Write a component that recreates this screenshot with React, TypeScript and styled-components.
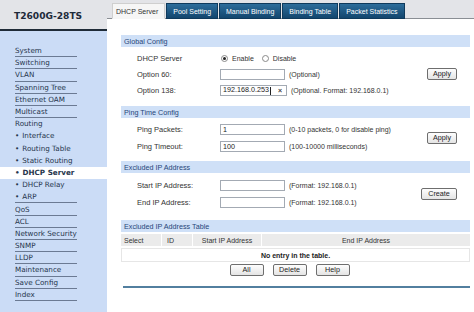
import styled, { createGlobalStyle } from "styled-components";

const GlobalStyle = createGlobalStyle`
  html, body {
    margin: 0;
    padding: 0;
    background: #fff;
  }
  body {
    font-family: "Liberation Sans", Arial, sans-serif;
    font-size: 7.5px;
    color: #333;
  }
`;

const Page = styled.div`
  display: flex;
  width: 474px;
  height: 312px;
  overflow: hidden;
`;

const Sidebar = styled.aside`
  width: 107px;
  flex-shrink: 0;
  display: flex;
  flex-direction: column;
`;

const Brand = styled.div`
  height: 31px;
  box-sizing: border-box;
  background: #e3e4e8;
  border-bottom: 2px solid #1f2b38;
  display: flex;
  align-items: center;
  padding: 2px 0 0 14px;
  font-family: "DejaVu Sans", Verdana, sans-serif;
  font-weight: bold;
  font-size: 9.1px;
  color: #1d2a3a;
`;

const Nav = styled.nav`
  flex: 1;
  background: #cbdcf6;
  padding-top: 14px;
`;

const NavItem = styled.div<{ $active?: boolean }>`
  height: 12.2px;
  padding-left: 15px;
  background: ${(p) => (p.$active ? "#fff" : "transparent")};
  font-family: "DejaVu Sans", Verdana, sans-serif;
  font-size: 7.2px;
  font-weight: ${(p) => (p.$active ? "bold" : "normal")};
  color: #26354c;
`;

const NavLabel = styled.div<{ $line?: boolean }>`
  width: 62px;
  height: 100%;
  box-sizing: border-box;
  display: flex;
  align-items: center;
  gap: 3px;
  white-space: nowrap;
  border-bottom: 1px solid ${(p) => (p.$line ? "#6b7a93" : "transparent")};
`;

const Main = styled.main`
  flex: 1;
  display: flex;
  flex-direction: column;
`;

const TabBar = styled.div`
  height: 19px;
  box-sizing: border-box;
  background: #e3e4e8;
  border-bottom: 1px solid #8a8e94;
  display: flex;
  align-items: flex-end;
  gap: 1px;
  padding-left: 5px;
`;

const Tab = styled.div<{ $active?: boolean }>`
  height: 16px;
  box-sizing: border-box;
  padding: ${(p) => (p.$active ? "0 6px 0 3px" : "0 6px")};
  margin-bottom: -1px;
  display: flex;
  align-items: center;
  white-space: nowrap;
  font-size: 7px;
  color: ${(p) => (p.$active ? "#333" : "#fff")};
  background: ${(p) =>
    p.$active ? "#f6f6f6" : "linear-gradient(#2d6d9b, #13466e)"};
  border: 1px solid ${(p) => (p.$active ? "#cfcfcf" : "#0f3a5c")};
  border-bottom: 1px solid ${(p) => (p.$active ? "#f6f6f6" : "#0f3a5c")};
`;

const Content = styled.div`
  padding: 16px 4px 0 14px;
`;

const SectionBar = styled.div`
  height: 12px;
  background: #cfe0f7;
  padding-left: 3px;
  display: flex;
  align-items: center;
  color: #27467a;
  font-size: 7.2px;
`;

const FormGrid = styled.div<{ $rowH: number; $pt: number; $pb: number }>`
  display: grid;
  grid-template-columns: 83px 1fr auto;
  grid-auto-rows: ${(p) => p.$rowH}px;
  padding: ${(p) => p.$pt}px 13px ${(p) => p.$pb}px 16px;
`;

const Label = styled.div`
  grid-column: 1;
  align-self: center;
  color: #333;
`;

const Field = styled.div`
  grid-column: 2;
  display: flex;
  align-items: center;
  gap: 4px;
  font-size: 7px;
`;

const Action = styled.div<{ $row: string }>`
  grid-column: 3;
  grid-row: ${(p) => p.$row};
  align-self: center;
  display: flex;
`;

const Input = styled.div<{ $w?: number }>`
  width: ${(p) => p.$w ?? 65}px;
  height: 11px;
  box-sizing: border-box;
  border: 1px solid #a3aab3;
  background: #fff;
  padding: 0 2px;
  display: flex;
  align-items: center;
  justify-content: space-between;
  color: #222;
  font-size: 7.2px;
`;

const Caret = styled.span`
  display: inline-block;
  width: 1px;
  height: 8px;
  background: #222;
  margin-left: 1px;
  vertical-align: middle;
`;

const Clear = styled.span`
  font-size: 7px;
  font-weight: bold;
  color: #444;
  margin-right: 2px;
`;

const Hint = styled.span`
  color: #333;
`;

const Radio = styled.span<{ $checked?: boolean }>`
  width: 7px;
  height: 7px;
  box-sizing: border-box;
  border-radius: 50%;
  border: 1px solid #8a8a8a;
  background: #fff;
  display: inline-flex;
  align-items: center;
  justify-content: center;
  margin-left: 1px;

  &::after {
    content: "";
    width: 3px;
    height: 3px;
    border-radius: 50%;
    background: ${(p) => (p.$checked ? "#222" : "transparent")};
  }
`;

const RadioLabel = styled.span`
  margin-right: 3px;
`;

const Button = styled.button<{ $w: number }>`
  width: ${(p) => p.$w}px;
  height: 12px;
  padding: 0;
  border: 1px solid #6e6e6e;
  border-radius: 2px;
  background: linear-gradient(#fdfdfd, #e4e4e4);
  font-family: "Liberation Sans", Arial, sans-serif;
  font-size: 7.2px;
  color: #222;
  line-height: 10px;
`;

const TableHead = styled.div`
  display: grid;
  grid-template-columns: 40px 30px 68px 1fr;
  gap: 1px;
  margin-top: 2px;
  height: 12px;
  font-size: 7px;
`;

const HeadCell = styled.div<{ $center?: boolean; $pl?: number }>`
  background: #ebebeb;
  display: flex;
  align-items: center;
  justify-content: ${(p) => (p.$center ? "center" : "flex-start")};
  padding-left: ${(p) => p.$pl ?? 0}px;
  color: #333;
`;

const EmptyRow = styled.div`
  margin-top: 2px;
  height: 14px;
  box-sizing: border-box;
  border: 1px solid #e6e6e6;
  display: flex;
  align-items: center;
  justify-content: center;
  font-weight: bold;
  font-size: 7px;
  color: #222;
`;

const ButtonRow = styled.div`
  margin-top: 2px;
  display: flex;
  justify-content: center;
  gap: 9px;
  padding-right: 12px;
`;

const Divider = styled.div`
  margin: 10px 0 0 2px;
  height: 1.5px;
  background: #527f9f;
`;

type NavEntry = { name: string; sub?: boolean; line?: boolean; active?: boolean };

const navItems: NavEntry[] = [
  { name: "System", line: true },
  { name: "Switching", line: true },
  { name: "VLAN", line: true },
  { name: "Spanning Tree", line: true },
  { name: "Ethernet OAM", line: true },
  { name: "Multicast", line: true },
  { name: "Routing" },
  { name: "Interface", sub: true },
  { name: "Routing Table", sub: true },
  { name: "Static Routing", sub: true },
  { name: "DHCP Server", sub: true, active: true },
  { name: "DHCP Relay", sub: true },
  { name: "ARP", sub: true, line: true },
  { name: "QoS", line: true },
  { name: "ACL", line: true },
  { name: "Network Security", line: true },
  { name: "SNMP", line: true },
  { name: "LLDP", line: true },
  { name: "Maintenance", line: true },
  { name: "Save Config", line: true },
  { name: "Index", line: true },
];

const tabs = ["DHCP Server", "Pool Setting", "Manual Binding", "Binding Table", "Packet Statistics"];

const App = () => {
  return (
    <Page>
      <GlobalStyle />
      <Sidebar>
        <Brand>T2600G-28TS</Brand>
        <Nav>
          {navItems.map((item) => (
            <NavItem key={item.name} $active={item.active}>
              <NavLabel $line={item.line && !item.active}>
                {item.sub && <span>•</span>}
                <span>{item.name}</span>
              </NavLabel>
            </NavItem>
          ))}
        </Nav>
      </Sidebar>

      <Main>
        <TabBar>
          {tabs.map((t, i) => (
            <Tab key={t} $active={i === 0}>
              {t}
            </Tab>
          ))}
        </TabBar>

        <Content>
          <SectionBar>Global Config</SectionBar>
          <FormGrid $rowH={16} $pt={3} $pb={8}>
            <Label>DHCP Server</Label>
            <Field>
              <Radio $checked />
              <RadioLabel>Enable</RadioLabel>
              <Radio />
              <RadioLabel>Disable</RadioLabel>
            </Field>
            <Label>Option 60:</Label>
            <Field>
              <Input />
              <Hint>(Optional)</Hint>
            </Field>
            <Action $row="2">
              <Button $w={30}>Apply</Button>
            </Action>
            <Label>Option 138:</Label>
            <Field>
              <Input $w={67}>
                <span>
                  192.168.0.253
                  <Caret />
                </span>
                <Clear>×</Clear>
              </Input>
              <Hint>(Optional. Format: 192.168.0.1)</Hint>
            </Field>
          </FormGrid>

          <SectionBar>Ping Time Config</SectionBar>
          <FormGrid $rowH={17} $pt={3} $pb={6}>
            <Label>Ping Packets:</Label>
            <Field>
              <Input>1</Input>
              <Hint>(0-10 packets, 0 for disable ping)</Hint>
            </Field>
            <Action $row="1 / span 2">
              <Button $w={30}>Apply</Button>
            </Action>
            <Label>Ping Timeout:</Label>
            <Field>
              <Input>100</Input>
              <Hint>(100-10000 milliseconds)</Hint>
            </Field>
          </FormGrid>

          <SectionBar>Excluded IP Address</SectionBar>
          <FormGrid $rowH={17} $pt={4} $pb={9}>
            <Label>Start IP Address:</Label>
            <Field>
              <Input />
              <Hint>(Format: 192.168.0.1)</Hint>
            </Field>
            <Action $row="1 / span 2">
              <Button $w={36}>Create</Button>
            </Action>
            <Label>End IP Address:</Label>
            <Field>
              <Input />
              <Hint>(Format: 192.168.0.1)</Hint>
            </Field>
          </FormGrid>

          <SectionBar>Excluded IP Address Table</SectionBar>
          <TableHead>
            <HeadCell $pl={3}>Select</HeadCell>
            <HeadCell $pl={5}>ID</HeadCell>
            <HeadCell $center>Start IP Address</HeadCell>
            <HeadCell $center>End IP Address</HeadCell>
          </TableHead>
          <EmptyRow>No entry in the table.</EmptyRow>
          <ButtonRow>
            <Button $w={34}>All</Button>
            <Button $w={34}>Delete</Button>
            <Button $w={34}>Help</Button>
          </ButtonRow>
          <Divider />
        </Content>
      </Main>
    </Page>
  );
};

export default App;
